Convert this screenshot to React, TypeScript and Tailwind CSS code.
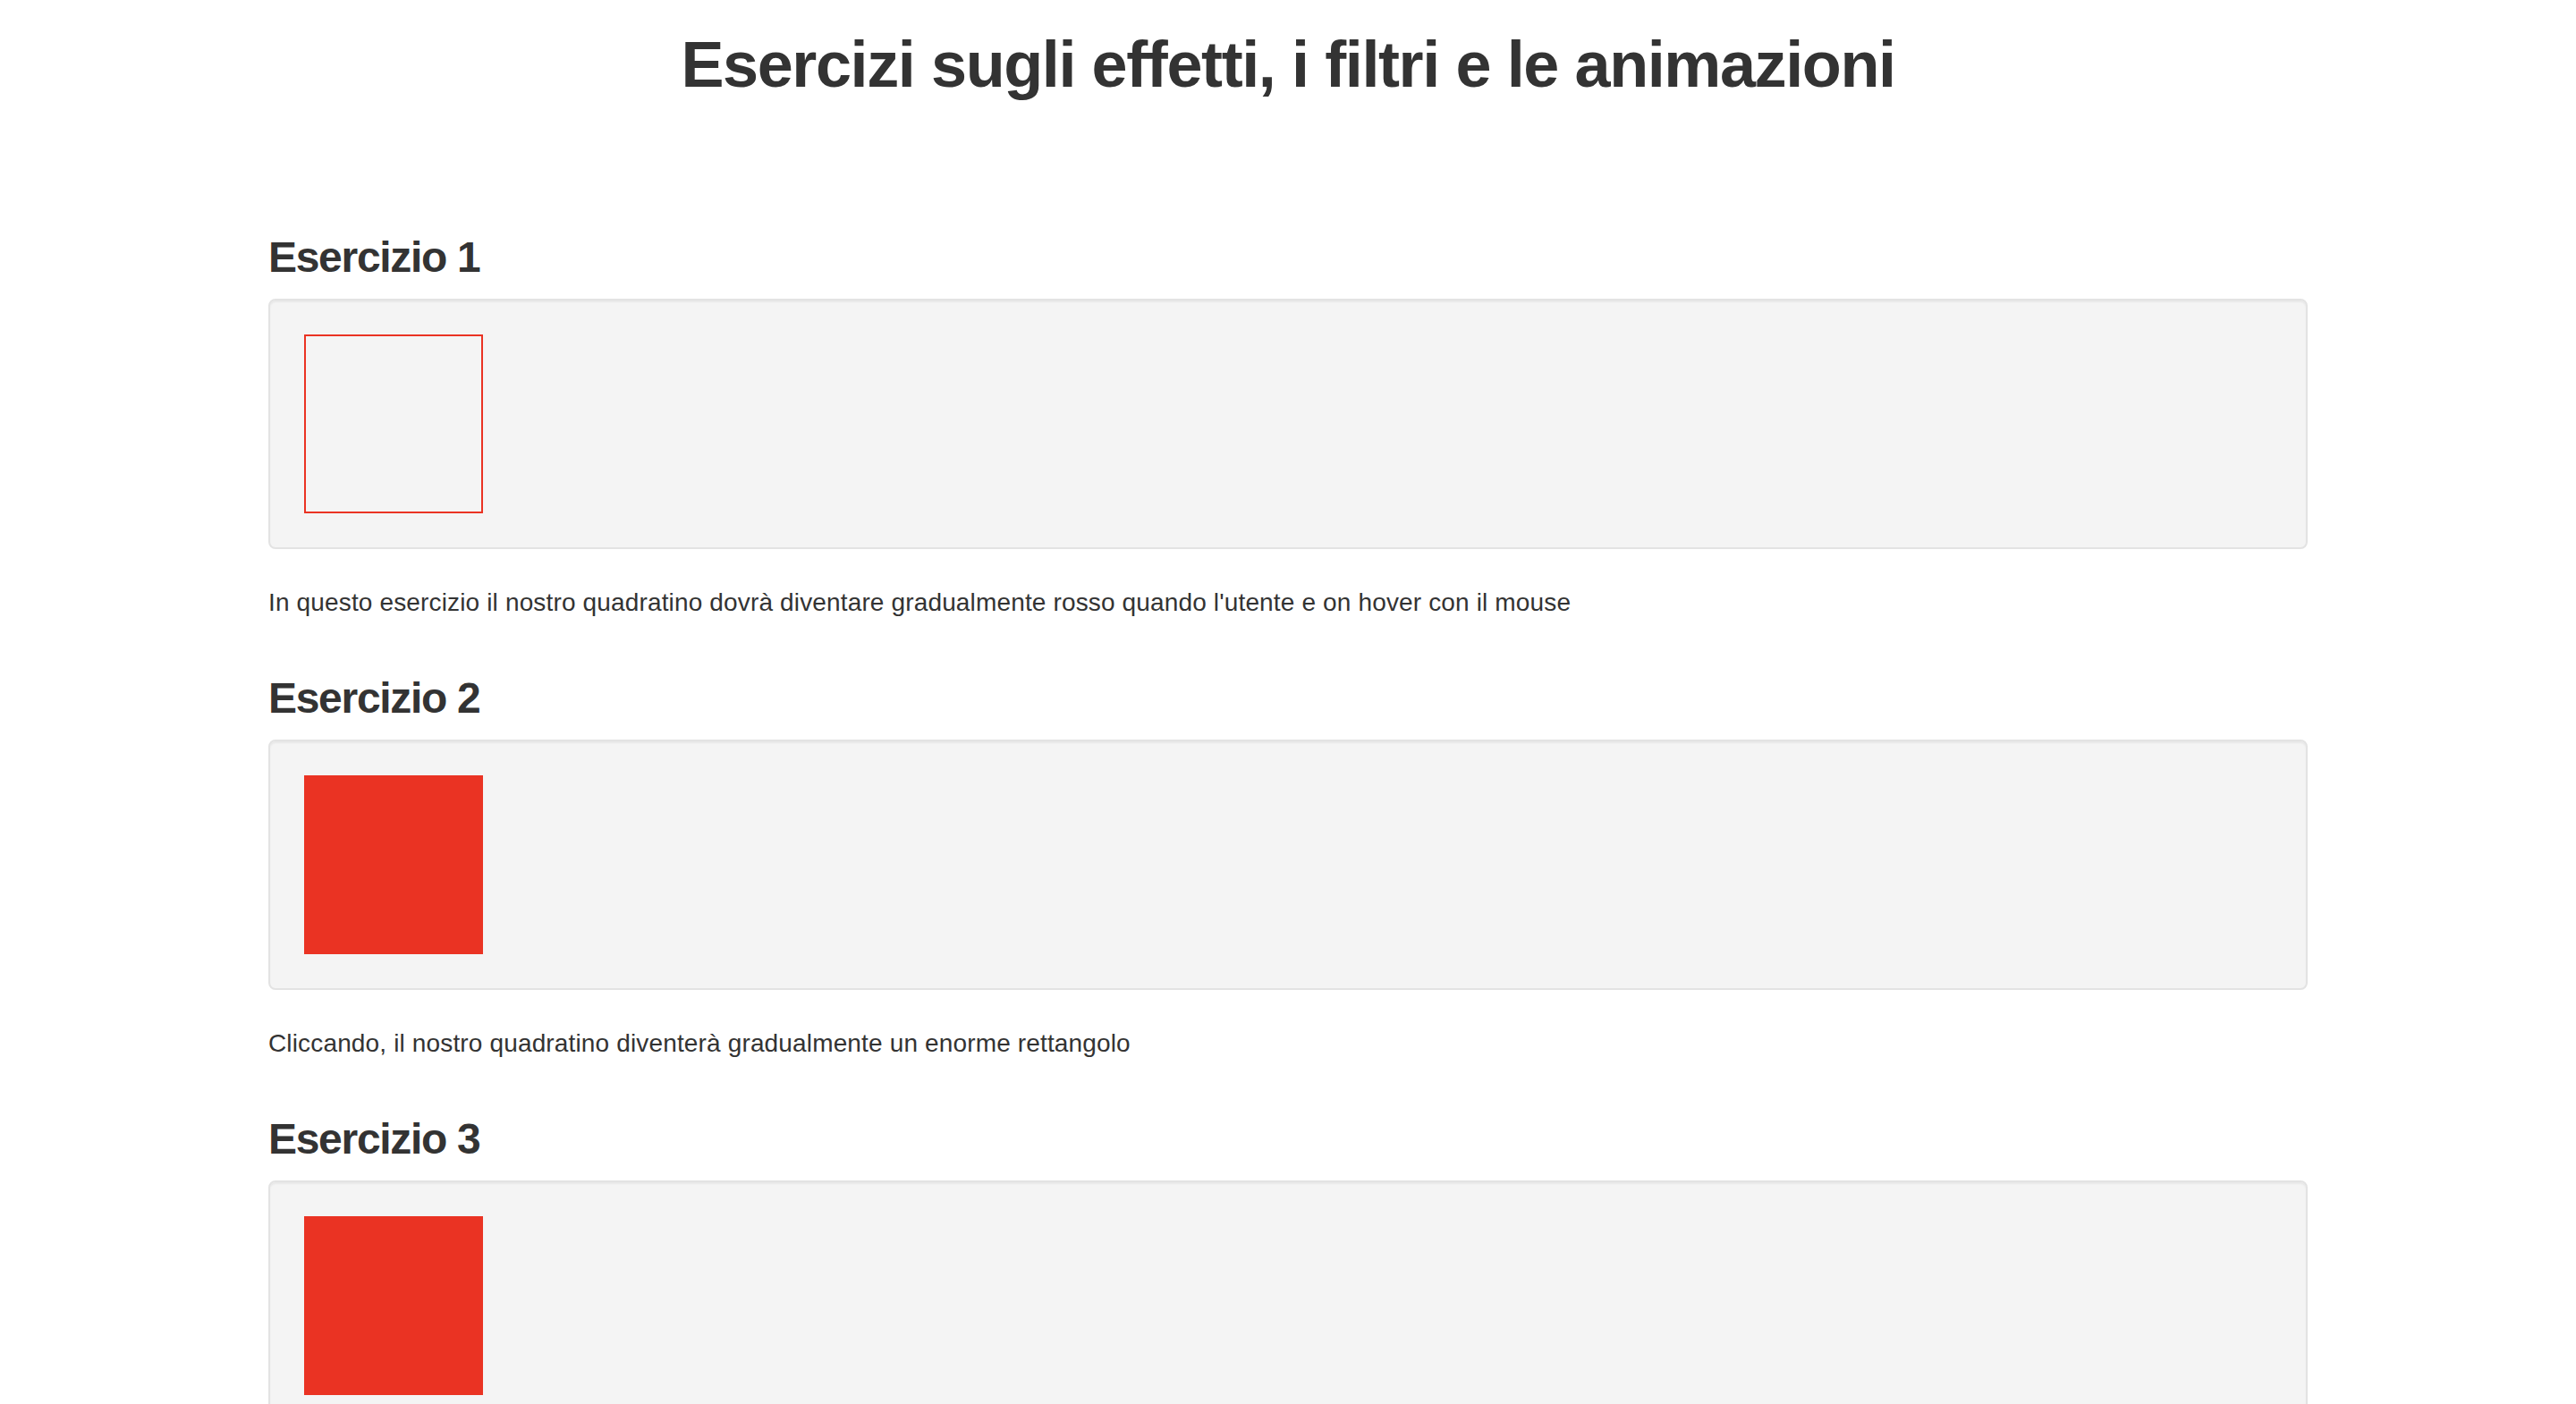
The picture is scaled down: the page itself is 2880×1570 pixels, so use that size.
import React from "react";

function Well({ filled }: { filled: boolean }) {
  return (
    <div className="rounded-[8px] border-2 border-[#e3e3e3] bg-[#f4f4f4] p-[38px] shadow-[inset_0_2px_2px_rgba(0,0,0,0.05)]">
      {filled ? (
        <div className="h-[200px] w-[200px] bg-[#ea3323]" />
      ) : (
        <div className="h-[200px] w-[200px] border-2 border-[#ea3323]" />
      )}
    </div>
  );
}

export default function App() {
  const font = { fontFamily: '"Liberation Sans", Arial, sans-serif' };
  return (
    <div className="min-h-screen bg-white text-[#333]" style={font}>
      <div className="mx-auto w-[2340px] px-[30px]">
        <h1 className="mt-[33px] mb-0 text-center text-[72px] leading-[79px] font-bold tracking-[-1.4px]">
          Esercizi sugli effetti, i filtri e le animazioni
        </h1>
        <div className="mt-[149px]">
          <h3 className="mb-[20px] text-[48px] leading-[53px] font-bold tracking-[-1.3px]">Esercizio 1</h3>
          <Well filled={false} />
          <p className="mt-[40px] text-[28px] leading-[40px] tracking-[0.15px]">
            In questo esercizio il nostro quadratino dovrà diventare gradualmente rosso quando l'utente e on hover con il mouse
          </p>
          <h3 className="mt-[60px] mb-[20px] text-[48px] leading-[53px] font-bold tracking-[-1.3px]">Esercizio 2</h3>
          <Well filled={true} />
          <p className="mt-[40px] text-[28px] leading-[40px] tracking-[0.15px]">
            Cliccando, il nostro quadratino diventerà gradualmente un enorme rettangolo
          </p>
          <h3 className="mt-[60px] mb-[20px] text-[48px] leading-[53px] font-bold tracking-[-1.3px]">Esercizio 3</h3>
          <Well filled={true} />
        </div>
      </div>
    </div>
  );
}
